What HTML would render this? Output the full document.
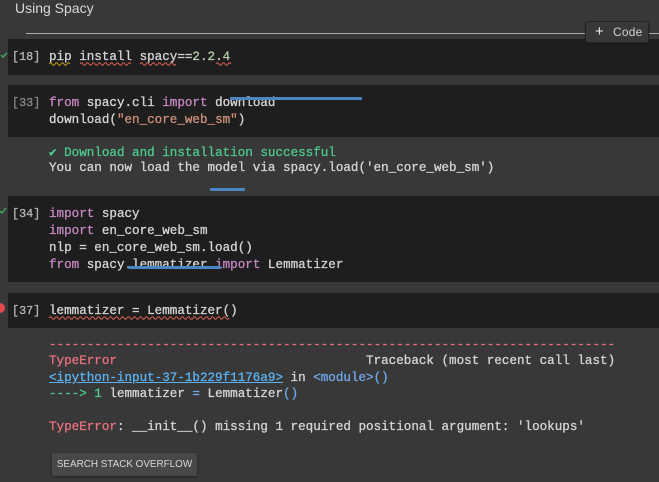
<!DOCTYPE html>
<html>
<head>
<meta charset="utf-8">
<style>
html,body{margin:0;padding:0;width:659px;height:482px;overflow:hidden;background:#383838}
body{position:relative;font-family:"Liberation Mono",monospace;font-size:12.58px;color:#d5d5d5}
.cell{position:absolute;left:8px;right:0;background:#1e1e1e}
.l{position:absolute;left:49px;white-space:pre;line-height:16px;height:16px;font-weight:400;-webkit-text-stroke:.3px currentColor}
.n{position:absolute;left:12px;white-space:pre;line-height:16px;font-size:11.8px;color:#b5b5b5;-webkit-text-stroke:.3px currentColor}
.k{color:#c586c0}.s{color:#ce9178}.g{color:#b5cea8}.r{color:#e8717e}.gr{color:#4ec88c}.b{color:#6fa8e8}
.a{color:#5cb2f0;text-decoration:underline}
.bar{position:absolute;height:3px;background:#4a86c5;border-radius:1px}
svg{position:absolute;left:0;top:0}
</style>
</head>
<body>
<div style="position:absolute;left:15px;top:0;font:14px/17px 'Liberation Sans',sans-serif;color:#d8d8d8">Using Spacy</div>
<div style="position:absolute;left:26px;right:0;top:33px;height:1px;background:#a8a8a8"></div>

<div class="cell" style="top:39px;height:36px"></div>
<div class="cell" style="top:85px;height:52px"></div>
<div class="cell" style="top:196px;height:86px"></div>
<div class="cell" style="top:293px;height:35px"></div>

<div style="position:absolute;left:585px;top:21px;width:62px;height:20px;background:#383838;border:1px solid #242424;border-radius:3px;box-shadow:0 1px 2px rgba(0,0,0,.4);font:12px/20px 'Liberation Sans',sans-serif;color:#cfcfcf">
<span style="position:absolute;left:9px;top:0;color:#eee;font-size:15px">+</span><span style="position:absolute;left:27px;top:0;letter-spacing:.2px">Code</span></div>

<div class="n" style="top:49px">[18]</div>
<div class="l" style="top:49px">pip install spacy==<span class="g">2.2.4</span></div>

<div class="n" style="top:95px;color:#888">[33]</div>
<div class="l" style="top:95px"><span class="k">from</span> spacy.cli <span class="k">import</span> download</div>
<div class="l" style="top:112px">download(<span class="s">"en_core_web_sm"</span>)</div>

<div class="l" style="top:145px;color:#4ec88c">✔ Download and installation successful</div>
<div class="l" style="top:160px">You can now load the model via spacy.load('en_core_web_sm')</div>

<div class="n" style="top:206px">[34]</div>
<div class="l" style="top:206px"><span class="k">import</span> spacy</div>
<div class="l" style="top:223px"><span class="k">import</span> en_core_web_sm</div>
<div class="l" style="top:240px">nlp = en_core_web_sm.load()</div>
<div class="l" style="top:257px"><span class="k">from</span> spacy.lemmatizer <span class="k">import</span> Lemmatizer</div>

<div class="n" style="top:303px">[37]</div>
<div class="l" style="top:303px">lemmatizer = Lemmatizer()</div>

<div class="l r" style="top:337px">---------------------------------------------------------------------------</div>
<div class="l" style="top:353px"><span class="r">TypeError</span>                                 Traceback (most recent call last)</div>
<div class="l" style="top:370px"><span class="a">&lt;ipython-input-37-1b229f1176a9&gt;</span> in <span class="b">&lt;module&gt;()</span></div>
<div class="l" style="top:386px"><span class="gr">----&gt; 1</span> lemmatizer <span class="b">=</span> Lemmatizer<span class="b">()</span></div>
<div class="l" style="top:419px"><span class="r">TypeError</span>: __init__() missing 1 required positional argument: 'lookups'</div>

<div style="position:absolute;left:52px;top:453px;width:145px;height:23px;background:#484848;box-shadow:0 1px 2px rgba(0,0,0,.45);border-radius:2px;font:9.9px/23px 'Liberation Sans',sans-serif;color:#d8d8d8;text-align:center;white-space:nowrap">SEARCH STACK OVERFLOW</div>

<div class="bar" style="left:230px;top:97px;width:132px"></div>
<div class="bar" style="left:210px;top:188px;width:35px"></div>
<div class="bar" style="left:128px;top:266px;width:93px"></div>

<svg width="659" height="482" fill="none">
<path d="M1 55l2 2 4-4" stroke="#3fae5a" stroke-width="1.3"/>
<path d="M0 211l2 2 4-5" stroke="#3fae5a" stroke-width="1.3"/>
<circle cx="0" cy="308" r="5" fill="#e5484d"/>
<path d="M49 64q1.500-2.500 3 0t3 0 3 0 3 0 3 0 3 0 3 0" stroke="#d2a520" stroke-width=".9"/>
<path d="M80 64q1.500-2.500 3 0t3 0 3 0 3 0 3 0 3 0 3 0 3 0 3 0 3 0 3 0 3 0 3 0 3 0 3 0 3 0 3 0" stroke="#e8674f" stroke-width=".9"/>
<path d="M140 64q1.500-2.500 3 0t3 0 3 0 3 0 3 0 3 0 3 0 3 0 3 0 3 0 3 0 3 0" stroke="#e8674f" stroke-width=".9"/>
<path d="M216 64q1.500-2.500 3 0t3 0 3 0 3 0 3 0" stroke="#e8674f" stroke-width=".9"/>
<path d="M49 318q1.500-2.500 3 0t3 0 3 0 3 0 3 0 3 0 3 0 3 0 3 0 3 0 3 0 3 0 3 0 3 0 3 0 3 0 3 0 3 0 3 0 3 0 3 0 3 0 3 0 3 0 3 0 3 0" stroke="#e8674f" stroke-width=".9"/>
<path d="M127 318q1.500-2.500 3 0t3 0 3 0 3 0 3 0 3 0 3 0 3 0 3 0 3 0 3 0 3 0 3 0 3 0 3 0 3 0 3 0 3 0 3 0 3 0 3 0 3 0 3 0 3 0 3 0 3 0 3 0 3 0 3 0 3 0 3 0 3 0 3 0 3 0" stroke="#e8674f" stroke-width=".9"/>
</svg>
</body>
</html>
